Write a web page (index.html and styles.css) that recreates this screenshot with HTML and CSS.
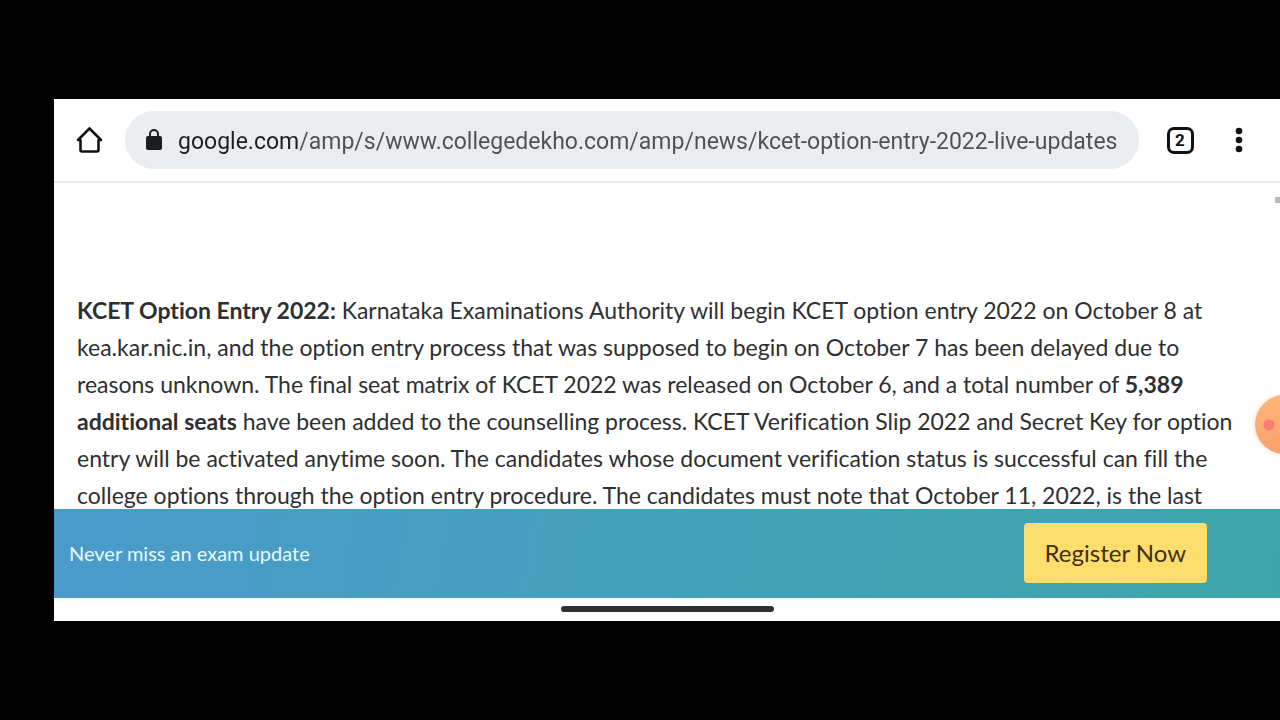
FILE: index.html
```
<!DOCTYPE html>
<html lang="en">
<head>
  <meta charset="UTF-8">
  <meta name="viewport" content="width=device-width, initial-scale=1.0">
  <title>KCET Option Entry 2022</title>
  <link rel="stylesheet" href="styles.css">
</head>
<body>
  <div class="screen">
    <header class="toolbar">
      <a class="icon-btn home-btn" href="#" aria-label="Home">
        <svg width="28" height="28" viewBox="0 0 28 28" fill="none" stroke="#111" stroke-width="2.6" stroke-linejoin="round" stroke-linecap="round">
          <path d="M2 14 13.500 2.500 25 14h-2.500v10a1.500 1.500 0 0 1-1.500 1.500H6A1.500 1.500 0 0 1 4.500 24V14z"/>
        </svg>
      </a>
      <div class="address-bar">
        <svg class="lock" width="16" height="22" viewBox="0 0 16 22" aria-hidden="true">
          <path d="M4 9V5a4 4 0 0 1 8 0v4" fill="none" stroke="#1b1d20" stroke-width="2"/>
          <rect x="0" y="7" width="16" height="14" rx="2" fill="#1b1d20"/>
        </svg>
        <input class="url" type="text" aria-label="Address" spellcheck="false" value="google.com/amp/s/www.collegedekho.com/amp/news/kcet-option-entry-2022-live-updates">
      </div>
      <button class="icon-btn tabs-btn" type="button" aria-label="Open tabs"><span class="tab-count">2</span></button>
      <button class="icon-btn menu-btn" type="button" aria-label="Menu">
        <svg width="8" height="26" viewBox="0 0 8 26" fill="#111">
          <circle cx="4" cy="4" r="3.300"/>
          <circle cx="4" cy="13" r="3.300"/>
          <circle cx="4" cy="22" r="3.300"/>
        </svg>
      </button>
    </header>

    <main class="article">
      <p class="article-text"><strong>KCET Option Entry 2022:</strong> Karnataka Examinations Authority will begin KCET option entry 2022 on October 8 at kea.kar.nic.in, and the option entry process that was supposed to begin on October 7 has been delayed due to reasons unknown. The final seat matrix of KCET 2022 was released on October 6, and a total number of <strong>5,389 additional seats</strong> have been added to the counselling process. KCET Verification Slip 2022 and Secret Key for option entry will be activated anytime soon. The candidates whose document verification status is successful can fill the college options through the option entry procedure. The candidates must note that October 11, 2022, is the last</p>
      <div class="scroll-thumb"></div>
      <div class="bubble"></div>
    </main>

    <section class="banner">
      <span class="banner-text">Never miss an exam update</span>
      <button class="register-btn" type="button">Register Now</button>
    </section>

    <div class="gesture-area">
      <div class="gesture-bar"></div>
    </div>
  </div>
</body>
</html>
```
FILE: styles.css
```
* {
  box-sizing: border-box;
}

body {
  margin: 0;
  padding: 99px 0 99px 54px;
  height: 100vh;
  display: flex;
  background: #000;
  font-family: 'Lato', sans-serif;
  font-variant-ligatures: none;
  color: #2e2f31;
}

.screen {
  flex: 1;
  min-width: 0;
  display: flex;
  flex-direction: column;
  background: #fff;
}

/* Browser toolbar */
.toolbar {
  display: flex;
  align-items: center;
  padding: 12px 0;
  border-bottom: 2px solid #e8e9eb;
}

.icon-btn {
  display: flex;
  justify-content: center;
  align-items: center;
  padding: 0;
  border: 0;
  background: none;
  cursor: pointer;
}

.home-btn {
  width: 71px;
}

.address-bar {
  flex: 1;
  min-width: 0;
  display: flex;
  align-items: center;
  gap: 16px;
  height: 58px;
  padding: 0 11px 0 21px;
  border-radius: 29px;
  background: #e9edf0;
}

.lock {
  flex: none;
}

/* The host is drawn darker than the rest of the address */
.url {
  flex: 1;
  min-width: 0;
  height: 36px;
  padding: 2px 0 0;
  border: 0;
  outline: none;
  font-family: 'Roboto', sans-serif;
  font-size: 23px;
  color: #4d5156;
  background: linear-gradient(90deg, #1d1f22 121px, #4d5156 121px);
  -webkit-background-clip: text;
  background-clip: text;
  -webkit-text-fill-color: transparent;
}

.tabs-btn {
  width: 82px;
}

.tab-count {
  width: 27px;
  height: 27px;
  border: 3px solid #111;
  border-radius: 7px;
  font-family: 'Roboto', sans-serif;
  font-size: 17px;
  font-weight: 700;
  line-height: 21px;
  text-align: center;
  color: #111;
}

.menu-btn {
  width: 35px;
  margin-right: 24px;
}

/* Article */
.article {
  position: relative;
  flex: 1;
  min-height: 0;
  padding: 109px 32px 0 23px;
  overflow: hidden;
}

.article-text {
  margin: 0;
  font-size: 23px;
  line-height: 37px;
}

.scroll-thumb {
  position: absolute;
  top: 14px;
  right: 0;
  width: 5px;
  height: 6px;
  background: #b9b9b9;
}

.bubble {
  position: absolute;
  top: 212px;
  right: -34px;
  width: 59px;
  height: 59px;
  border-radius: 50%;
  background: radial-gradient(circle at 14px 30px, #fb7c74 5px, transparent 6px), linear-gradient(#fdb777, #fca06c);
  box-shadow: 0 0 4px rgba(250, 170, 120, 0.5);
}

/* Update banner */
.banner {
  flex: none;
  display: flex;
  justify-content: space-between;
  align-items: center;
  height: 89px;
  padding: 0 73px 2px 15px;
  background: linear-gradient(100deg, #4a9bcb, #3da5a9);
}

.banner-text {
  font-size: 20px;
  color: #e8faff;
}

.register-btn {
  height: 60px;
  padding: 0 21px;
  border: 0;
  border-radius: 4px;
  background: #fddd6c;
  font-family: inherit;
  font-size: 24px;
  color: #40300f;
  cursor: pointer;
}

.gesture-area {
  flex: none;
  display: flex;
  justify-content: center;
  align-items: center;
  height: 23px;
  padding-bottom: 2px;
}

.gesture-bar {
  width: 213px;
  height: 6px;
  border-radius: 3px;
  background: #303030;
}
```
